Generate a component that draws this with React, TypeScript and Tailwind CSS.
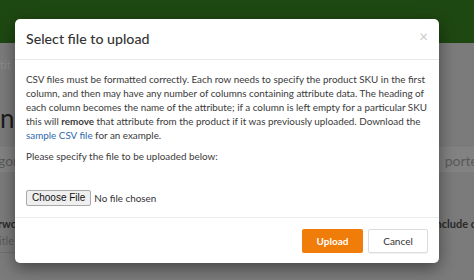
import React from "react";

function BackgroundPage() {
  return (
    <div className="flex h-[280px] w-[474px] flex-col overflow-hidden bg-[#7b7b7b] font-['Lato','Liberation_Sans',sans-serif]">
      {/* top bar */}
      <div className="h-[43px] shrink-0 bg-[#1e4812]" />

      <div className="mt-[16px] h-[12px] text-[11px] leading-[12px] text-[#8c8c8c]">tit</div>

      {/* page heading peeking out on the left */}
      <div className="mt-[34px] h-[26px] text-[26px] leading-[26px] text-[#1b1b1b]">n</div>

      {/* tab band */}
      <div className="mt-[16px] flex h-[25px] items-end justify-between border-y border-[#848484] bg-[#828282] pb-[1px] text-[14px] leading-[18px] text-[#5a5a5a]">
        <span className="-ml-[2px]">gor</span>
        <span className="-mr-[4px]">porte</span>
      </div>

      <div className="mt-[45px] flex items-center justify-between text-[11px] font-bold leading-[14px] text-[#2a2a2a]">
        <span className="-ml-[2px]">rwo</span>
        <span className="-mr-[2px]">nclude c</span>
      </div>

      <div className="mt-[3px] w-[15px] border-b border-[#6e6e6e] pb-[4px] text-[11px] leading-[14px] text-[#5a5a5a]">
        <span className="-ml-[1px]">itle</span>
      </div>
    </div>
  );
}

function UploadModal() {
  return (
    <div className="absolute left-[15px] top-[19px] w-[424px] rounded-[5px] bg-white font-['Lato','Liberation_Sans',sans-serif] text-[#3a3a3a] shadow-[0_5px_16px_rgba(0,0,0,0.45)]">
      {/* header */}
      <div className="relative flex h-[41px] items-center border-b border-[#e8e8e8] px-[11px]">
        <h2 className="text-[14.2px] font-medium text-[#333]">Select file to upload</h2>
        <span className="absolute right-[11px] top-[9px] text-[15px] leading-[16px] text-[#c9c9c9]">×</span>
      </div>

      {/* body */}
      <div className="px-[11px] pt-[12px] text-[9.85px] leading-[14px]">
        <p className="whitespace-nowrap">
          CSV files must be formatted correctly. Each row needs to specify the product SKU in the first
          <br />
          column, and then may have any number of columns containing attribute data. The heading of
          <br />
          each column becomes the name of the attribute; if a column is left empty for a particular SKU
          <br />
          this will <strong className="font-bold">remove</strong> that attribute from the product if it was previously uploaded. Download the
          <br />
          <a className="text-[#2f6aae]">sample CSV file</a> for an example.
        </p>
        <p className="mt-[7px]">Please specify the file to be uploaded below:</p>

        <div className="mt-[27px] flex items-center gap-[3px] pb-[11px]">
          <button
            type="button"
            className="h-[16px] rounded-[2px] border border-[#a9a9a9] bg-[#efefef] px-[5px] font-['Liberation_Sans',Arial,sans-serif] text-[10px] leading-[14px] text-[#111]"
          >
            Choose File
          </button>
          <span className="text-[9.85px] text-[#333]">No file chosen</span>
        </div>
      </div>

      {/* footer */}
      <div className="flex justify-end gap-[5px] border-t border-[#ececec] px-[11px] pb-[10px] pt-[11px]">
        <button
          type="button"
          className="h-[24px] w-[61px] rounded-[2px] bg-[#f07c0a] text-[10px] font-bold text-white"
        >
          Upload
        </button>
        <button
          type="button"
          className="h-[24px] w-[60px] rounded-[2px] border border-[#dcdcdc] bg-white text-[10px] text-[#333] shadow-[0_1px_1px_rgba(0,0,0,0.05)]"
        >
          Cancel
        </button>
      </div>
    </div>
  );
}

export default function App() {
  return (
    <div className="relative h-[280px] w-[474px] overflow-hidden">
      <BackgroundPage />
      <UploadModal />
    </div>
  );
}
